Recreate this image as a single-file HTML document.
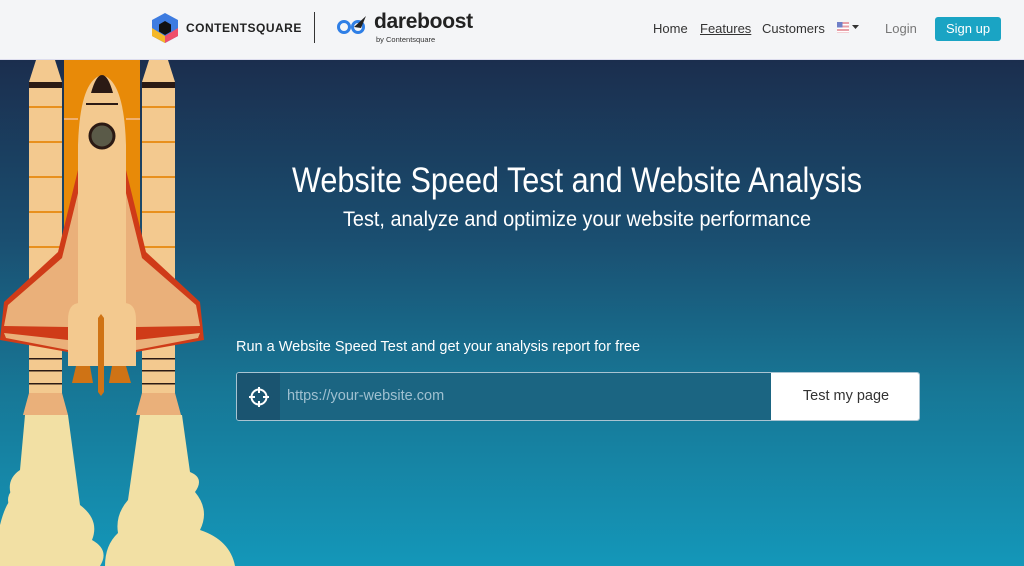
<!DOCTYPE html>
<html><head><meta charset="utf-8"><style>
*{margin:0;padding:0;box-sizing:border-box}
body{width:1024px;height:566px;overflow:hidden;font-family:"Liberation Sans",sans-serif;position:relative;background:#f4f5f7}
.hdr{position:absolute;left:0;top:0;width:1024px;height:60px;background:#f4f5f7;border-bottom:1px solid #dde}
.hero{position:absolute;left:0;top:60px;width:1024px;height:506px;background:linear-gradient(180deg,#1b2e4e 0%,#1a4e70 35%,#177796 65%,#1497b9 100%)}
.nav{position:absolute;top:21px;font-size:13px;color:#333}
.abs{position:absolute}
</style></head><body>
<div class="hdr">
  <svg class="abs" style="left:150px;top:12px" width="30" height="32" viewBox="0 0 30 32">
    <polygon points="15,1 28,8 28,24 15,31 2,24 2,8" fill="#3d7be0"/>
    <polygon points="2,16 2,24 15,31 15,24" fill="#f5b829"/>
    <polygon points="28,16 28,24 15,31 15,24" fill="#ef4f6b"/>
    <polygon points="15,9 21,12.5 21,19.5 15,23 9,19.5 9,12.5" fill="#111"/>
  </svg>
  <div class="abs" style="left:186px;top:21px;font-size:12px;font-weight:bold;letter-spacing:0.5px;color:#222">CONTENTSQUARE</div>
  <div class="abs" style="left:314px;top:12px;width:1px;height:31px;background:#333"></div>
  <svg class="abs" style="left:336px;top:15px" width="34" height="20" viewBox="0 0 34 20">
    <circle cx="8" cy="12" r="5.5" fill="none" stroke="#2f7fe6" stroke-width="3"/>
    <circle cx="22" cy="12" r="5.5" fill="none" stroke="#2f7fe6" stroke-width="3"/>
    <polygon points="18,12 30,1 25,13" fill="#222"/>
  </svg>
  <div class="abs" style="left:374px;top:10px;font-size:21px;font-weight:bold;color:#222;letter-spacing:-0.3px">dareboost</div>
  <div class="abs" style="left:376px;top:35px;font-size:7.5px;color:#333">by Contentsquare</div>
  <div class="nav" style="left:653px">Home</div>
  <div class="nav" style="left:700px;text-decoration:underline">Features</div>
  <div class="nav" style="left:762px">Customers</div>
  <svg class="abs" style="left:837px;top:22px" width="24" height="12" viewBox="0 0 24 12">
    <rect x="0" y="0" width="12" height="11" fill="#e8a0a8"/><rect x="0" y="2" width="12" height="1.5" fill="#fff"/><rect x="0" y="5.5" width="12" height="1.5" fill="#fff"/><rect x="0" y="9" width="12" height="1.5" fill="#fff"/><rect x="0" y="0" width="5.5" height="5.5" fill="#7080c8"/>
    <polygon points="15,3 22,3 18.5,7" fill="#333"/>
  </svg>
  <div class="nav" style="left:885px;color:#777">Login</div>
  <div class="abs" style="left:935px;top:17px;width:66px;height:24px;background:#1aa4c4;border-radius:3px;color:#fff;font-size:13px;text-align:center;line-height:24px">Sign up</div>
</div>
<div class="hero">
  <svg class="abs" style="left:0;top:0" width="240" height="506" viewBox="0 60 240 506">
    <path d="M25,415 L68,415 L80,505 Q100,520 92,540 Q110,550 100,566 L0,566 L0,525 Q5,505 12,498 Q5,480 20,470 Z" fill="#f2e0a4"/>
    <path d="M140,415 L182,415 L190,472 Q205,478 195,492 Q210,510 200,530 Q230,540 235,566 L105,566 Q105,545 118,533 Q115,515 128,500 Z" fill="#f2e0a4"/>
    <circle cx="22" cy="500" r="14" fill="#f2e0a4"/>
    <circle cx="18" cy="540" r="22" fill="#f2e0a4"/>
    <polygon points="29,393 62,393 68,415 23,415" fill="#eab07a"/>
    <polygon points="142,393 175,393 181,415 136,415" fill="#eab07a"/>
    <polygon points="36,60 55,60 62,82 62,393 29,393 29,82" fill="#f3c98f"/>
    <polygon points="149,60 168,60 175,82 175,393 142,393 142,82" fill="#f3c98f"/>
    <rect x="29" y="82" width="33" height="6" fill="#2b1a14"/>
    <rect x="142" y="82" width="33" height="6" fill="#2b1a14"/>
    <g fill="#e8901e">
      <rect x="29" y="106" width="33" height="2"/><rect x="29" y="141" width="33" height="2"/><rect x="29" y="176" width="33" height="2"/><rect x="29" y="211" width="33" height="2"/><rect x="29" y="246" width="33" height="2"/>
      <rect x="142" y="106" width="33" height="2"/><rect x="142" y="141" width="33" height="2"/><rect x="142" y="176" width="33" height="2"/><rect x="142" y="211" width="33" height="2"/><rect x="142" y="246" width="33" height="2"/>
    </g>
    <g fill="#2b1a14">
      <rect x="29" y="358" width="33" height="1.5"/><rect x="29" y="370" width="33" height="1.5"/><rect x="29" y="383" width="33" height="1.5"/>
      <rect x="142" y="358" width="33" height="1.5"/><rect x="142" y="370" width="33" height="1.5"/><rect x="142" y="383" width="33" height="1.5"/>
    </g>
    <rect x="64" y="60" width="76" height="180" fill="#e88a08"/>
    <polygon points="78,170 58,252 4,302 0,340 68,352 136,352 204,340 200,302 146,252 126,170" fill="#cf3b18"/>
    <polygon points="80,185 62,258 8,305 4,326 68,327 136,327 200,326 196,305 142,258 124,185" fill="#eab07a"/>
    <polygon points="4,333 68,340 136,340 200,333 198,338 136,350 68,350 6,338" fill="#eab07a"/>
    <path d="M78,145 Q80,80 102,75 Q124,80 126,145 L126,310 L78,310 Z" fill="#f3c98f"/>
    <path d="M91,93 Q96,75 102,75 Q108,75 113,93 Z" fill="#2b1a14"/>
    <rect x="86" y="103" width="32" height="2" fill="#2b1a14"/>
    <rect x="64" y="118" width="14" height="2" fill="#f0b070"/><rect x="126" y="118" width="14" height="2" fill="#f0b070"/>
    <circle cx="102" cy="136" r="12" fill="#5a5a48" stroke="#2b1a14" stroke-width="3"/>
    <path d="M68,320 Q68,303 80,303 L124,303 Q136,303 136,320 L136,366 L68,366 Z" fill="#f3c98f"/>
    <polygon points="76,366 90,366 93,383 72,383" fill="#cf7315"/>
    <polygon points="112,366 126,366 131,383 109,383" fill="#cf7315"/>
    <polygon points="101,314 104,318 104,392 101,396 98,392 98,318" fill="#cf7315"/>
  </svg>
  <svg class="abs" style="left:0;top:0" width="1024" height="200">
    <text x="292" y="132" textLength="570" lengthAdjust="spacingAndGlyphs" font-family="Liberation Sans" font-size="35" fill="#fff">Website Speed Test and Website Analysis</text>
    <text x="343" y="166" textLength="468" lengthAdjust="spacingAndGlyphs" font-family="Liberation Sans" font-size="21" fill="#fff">Test, analyze and optimize your website performance</text>
  </svg>
  <div class="abs" style="left:236px;top:279px;font-size:14.5px;color:#fff">Run a Website Speed Test and get your analysis report for free</div>
  <div class="abs" style="left:236px;top:312px;width:684px;height:49px;border:1px solid #a9c4d2;border-radius:3px;background:#1b6582;overflow:hidden">
    <div class="abs" style="left:0;top:0;width:43px;height:47px;background:#1a5470"></div>
    <svg class="abs" style="left:11px;top:13px" width="22" height="22" viewBox="0 0 22 22">
      <circle cx="11" cy="11" r="7.5" fill="none" stroke="#fff" stroke-width="2"/>
      <path d="M11,1 V7 M11,15 V21 M1,11 H7 M15,11 H21" stroke="#fff" stroke-width="2"/>
    </svg>
    <div class="abs" style="left:50px;top:15px;font-size:14.5px;color:#9fc0d0">https://your-website.com</div>
    <div class="abs" style="left:534px;top:0;width:150px;height:47px;background:#fff;color:#333;font-size:14.5px;text-align:center;line-height:47px">Test my page</div>
  </div>
</div>
</body></html>
